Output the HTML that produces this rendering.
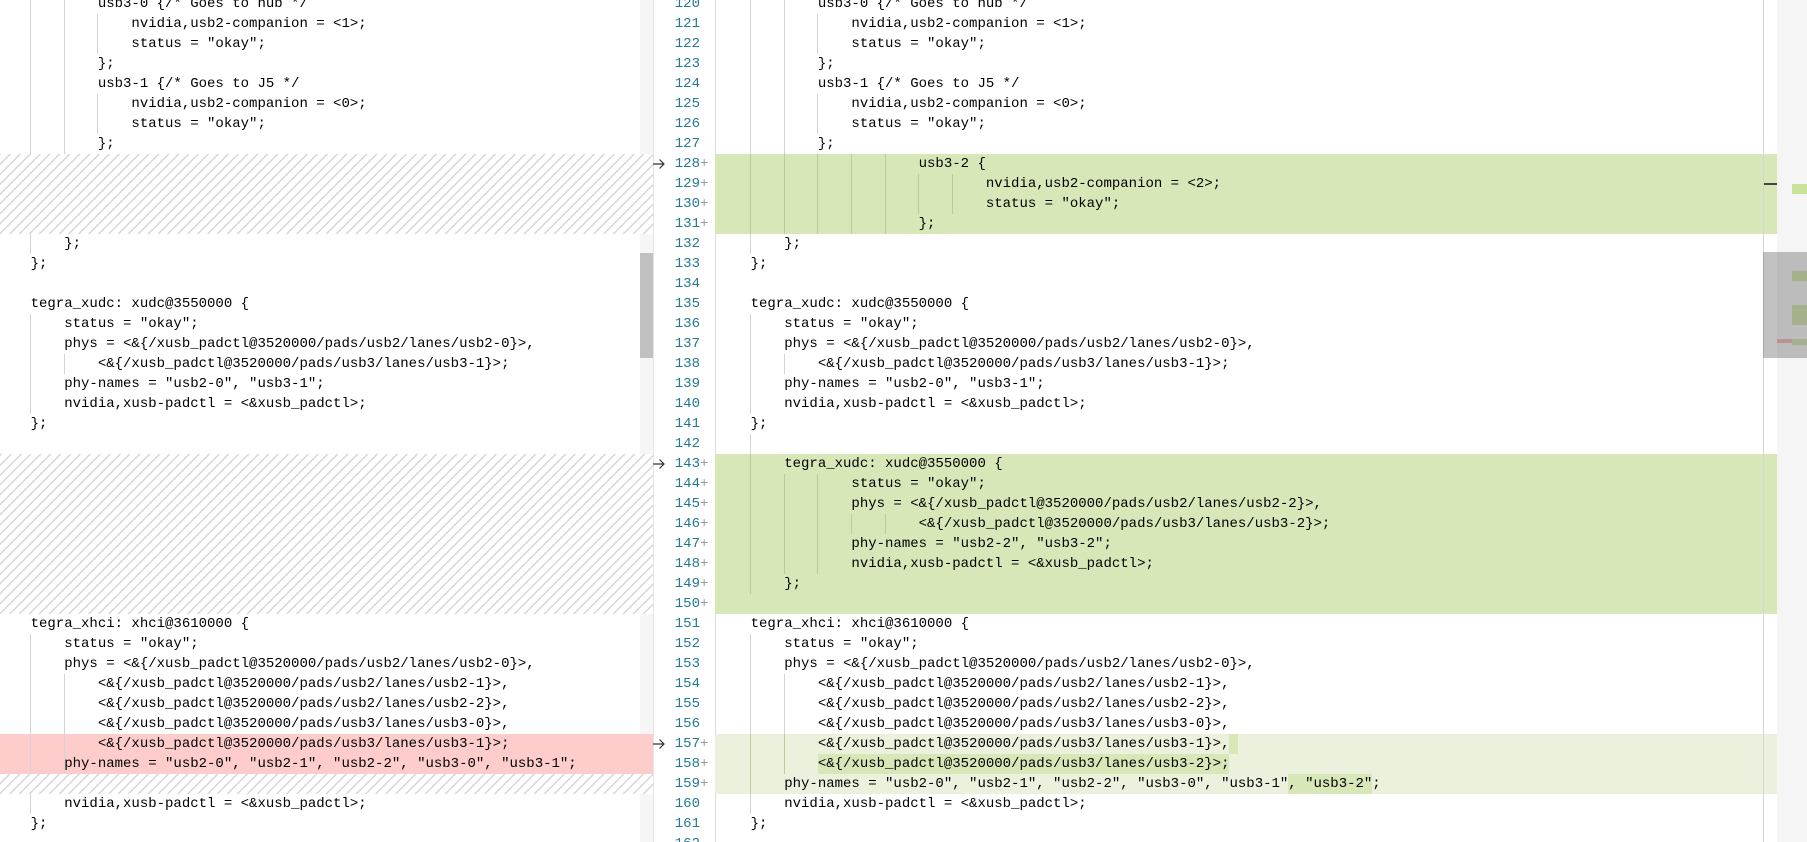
<!DOCTYPE html>
<html><head><meta charset="utf-8">
<style>
html,body{margin:0;padding:0;width:1807px;height:842px;overflow:hidden;background:#fff;position:relative;font-family:"Liberation Mono",monospace;}
.a{position:absolute;}
pre{margin:0;position:absolute;font-family:"Liberation Mono",monospace;font-size:14px;line-height:20px;color:#000;white-space:pre;}
.hatch{background:repeating-linear-gradient(-45deg,#d6d6d6 0 1.4px,#fff 1.4px 7px);}
.g{position:absolute;width:1px;background:#d3d3d3;}
.gg{position:absolute;width:1px;background:#bccb9c;}
.ln{color:#237893;text-align:right;width:60px;}
.pl{color:#9a9a9a;}
</style></head><body>

<!-- left pane -->
<div class="a" style="left:0;top:0;width:654px;height:842px;overflow:hidden;">
  <div class="a hatch" style="left:0;top:154px;width:654px;height:80px"></div>
  <div class="a hatch" style="left:0;top:454px;width:654px;height:160px"></div>
  <div class="a hatch" style="left:0;top:774px;width:654px;height:20px"></div>
  <div class="a" style="left:0;top:734px;width:654px;height:40px;background:#ffcccc"></div>
  <!-- left guides -->
  <div class="g" style="left:30px;top:-6px;height:160px"></div>
  <div class="g" style="left:64px;top:-6px;height:160px"></div>
  <div class="g" style="left:97px;top:14px;height:40px"></div>
  <div class="g" style="left:97px;top:94px;height:40px"></div>
  <div class="g" style="left:30px;top:234px;height:20px"></div>
  <div class="g" style="left:30px;top:314px;height:100px"></div>
  <div class="g" style="left:64px;top:354px;height:20px"></div>
  <div class="g" style="left:30px;top:634px;height:140px"></div>
  <div class="g" style="left:30px;top:794px;height:20px"></div>
  <div class="g" style="left:64px;top:674px;height:100px"></div>
  <div class="a" style="left:0;top:0;width:640px;height:842px;overflow:hidden">
<pre style="left:-3px;top:-6px">            usb3-0 {/* Goes to hub */
                nvidia,usb2-companion = &lt;1&gt;;
                status = "okay";
            };
            usb3-1 {/* Goes to J5 */
                nvidia,usb2-companion = &lt;0&gt;;
                status = "okay";
            };




        };
    };

    tegra_xudc: xudc@3550000 {
        status = "okay";
        phys = &lt;&amp;{/xusb_padctl@3520000/pads/usb2/lanes/usb2-0}&gt;,
            &lt;&amp;{/xusb_padctl@3520000/pads/usb3/lanes/usb3-1}&gt;;
        phy-names = "usb2-0", "usb3-1";
        nvidia,xusb-padctl = &lt;&amp;xusb_padctl&gt;;
    };









    tegra_xhci: xhci@3610000 {
        status = "okay";
        phys = &lt;&amp;{/xusb_padctl@3520000/pads/usb2/lanes/usb2-0}&gt;,
            &lt;&amp;{/xusb_padctl@3520000/pads/usb2/lanes/usb2-1}&gt;,
            &lt;&amp;{/xusb_padctl@3520000/pads/usb2/lanes/usb2-2}&gt;,
            &lt;&amp;{/xusb_padctl@3520000/pads/usb3/lanes/usb3-0}&gt;,
            &lt;&amp;{/xusb_padctl@3520000/pads/usb3/lanes/usb3-1}&gt;;
        phy-names = "usb2-0", "usb2-1", "usb2-2", "usb3-0", "usb3-1";

        nvidia,xusb-padctl = &lt;&amp;xusb_padctl&gt;;
    };</pre>
  </div>
  <!-- left scrollbar column -->
  <div class="a" style="left:640px;top:0;width:13px;height:154px;background:#f6f6f6"></div>
  <div class="a" style="left:640px;top:234px;width:13px;height:220px;background:#f6f6f6"></div>
  <div class="a" style="left:640px;top:614px;width:13px;height:120px;background:#f6f6f6"></div>
  <div class="a" style="left:640px;top:794px;width:13px;height:48px;background:#f6f6f6"></div>
  <div class="a" style="left:640px;top:253px;width:13px;height:105px;background:#c1c1c1"></div>
  <div class="a" style="left:653px;top:0;width:1px;height:842px;background:#e6e6e6"></div>
</div>

<!-- right pane -->
<div class="a" style="left:715px;top:0;width:1px;height:842px;background:#dedede"></div>
<div class="a" style="left:715px;top:154px;width:1062px;height:80px;background:#d8e7b8"></div>
<div class="a" style="left:715px;top:454px;width:1062px;height:160px;background:#d8e7b8"></div>
<div class="a" style="left:715px;top:734px;width:1062px;height:60px;background:#ecf1de"></div>
<div class="a" style="left:1229px;top:734px;width:9px;height:20px;background:#d8e7b8"></div>
<div class="a" style="left:818px;top:754px;width:411px;height:20px;background:#d8e7b8"></div>
<div class="a" style="left:1288px;top:774px;width:84px;height:20px;background:#d8e7b8"></div>

<!-- right guides -->
<div class="g" style="left:750px;top:-6px;height:160px"></div>
<div class="g" style="left:784px;top:-6px;height:160px"></div>
<div class="g" style="left:817px;top:14px;height:40px"></div>
<div class="g" style="left:817px;top:94px;height:40px"></div>
<div class="gg" style="left:750px;top:154px;height:80px"></div>
<div class="gg" style="left:784px;top:154px;height:80px"></div>
<div class="gg" style="left:817px;top:154px;height:80px"></div>
<div class="gg" style="left:851px;top:154px;height:80px"></div>
<div class="gg" style="left:885px;top:154px;height:80px"></div>
<div class="gg" style="left:918px;top:174px;height:40px"></div>
<div class="gg" style="left:952px;top:174px;height:40px"></div>
<div class="g" style="left:750px;top:234px;height:20px"></div>
<div class="g" style="left:750px;top:314px;height:100px"></div>
<div class="g" style="left:784px;top:354px;height:20px"></div>
<div class="g" style="left:750px;top:434px;height:20px"></div>
<div class="gg" style="left:750px;top:454px;height:140px"></div>
<div class="gg" style="left:784px;top:474px;height:100px"></div>
<div class="gg" style="left:817px;top:474px;height:100px"></div>
<div class="gg" style="left:851px;top:514px;height:20px"></div>
<div class="gg" style="left:885px;top:514px;height:20px"></div>
<div class="g" style="left:750px;top:634px;height:100px"></div>
<div class="gg" style="left:750px;top:734px;height:60px"></div>
<div class="g" style="left:750px;top:794px;height:20px"></div>
<div class="g" style="left:784px;top:674px;height:60px"></div>
<div class="gg" style="left:784px;top:734px;height:40px"></div>

<!-- line numbers -->
<pre class="ln" style="left:640px;top:-6px">120
121
122
123
124
125
126
127
128
129
130
131
132
133
134
135
136
137
138
139
140
141
142
143
144
145
146
147
148
149
150
151
152
153
154
155
156
157
158
159
160
161
162</pre>
<pre class="pl" style="left:700px;top:154px">+
+
+
+</pre>
<pre class="pl" style="left:700px;top:454px">+
+
+
+
+
+
+
+</pre>
<pre class="pl" style="left:700px;top:734px">+
+
+</pre>
<svg class="a" style="left:652px;top:158px" width="14" height="12" viewBox="0 0 14 12"><path d="M1 6H12M7.5 1.5L12 6L7.5 10.5" fill="none" stroke="#333" stroke-width="1.2"/></svg>
<svg class="a" style="left:652px;top:458px" width="14" height="12" viewBox="0 0 14 12"><path d="M1 6H12M7.5 1.5L12 6L7.5 10.5" fill="none" stroke="#333" stroke-width="1.2"/></svg>
<svg class="a" style="left:652px;top:738px" width="14" height="12" viewBox="0 0 14 12"><path d="M1 6H12M7.5 1.5L12 6L7.5 10.5" fill="none" stroke="#333" stroke-width="1.2"/></svg>

<div class="a" style="left:716px;top:0;width:1047px;height:842px;overflow:hidden">
<pre style="left:1px;top:-6px">            usb3-0 {/* Goes to hub */
                nvidia,usb2-companion = &lt;1&gt;;
                status = "okay";
            };
            usb3-1 {/* Goes to J5 */
                nvidia,usb2-companion = &lt;0&gt;;
                status = "okay";
            };
                        usb3-2 {
                                nvidia,usb2-companion = &lt;2&gt;;
                                status = "okay";
                        };
        };
    };

    tegra_xudc: xudc@3550000 {
        status = "okay";
        phys = &lt;&amp;{/xusb_padctl@3520000/pads/usb2/lanes/usb2-0}&gt;,
            &lt;&amp;{/xusb_padctl@3520000/pads/usb3/lanes/usb3-1}&gt;;
        phy-names = "usb2-0", "usb3-1";
        nvidia,xusb-padctl = &lt;&amp;xusb_padctl&gt;;
    };

        tegra_xudc: xudc@3550000 {
                status = "okay";
                phys = &lt;&amp;{/xusb_padctl@3520000/pads/usb2/lanes/usb2-2}&gt;,
                        &lt;&amp;{/xusb_padctl@3520000/pads/usb3/lanes/usb3-2}&gt;;
                phy-names = "usb2-2", "usb3-2";
                nvidia,xusb-padctl = &lt;&amp;xusb_padctl&gt;;
        };

    tegra_xhci: xhci@3610000 {
        status = "okay";
        phys = &lt;&amp;{/xusb_padctl@3520000/pads/usb2/lanes/usb2-0}&gt;,
            &lt;&amp;{/xusb_padctl@3520000/pads/usb2/lanes/usb2-1}&gt;,
            &lt;&amp;{/xusb_padctl@3520000/pads/usb2/lanes/usb2-2}&gt;,
            &lt;&amp;{/xusb_padctl@3520000/pads/usb3/lanes/usb3-0}&gt;,
            &lt;&amp;{/xusb_padctl@3520000/pads/usb3/lanes/usb3-1}&gt;,
            &lt;&amp;{/xusb_padctl@3520000/pads/usb3/lanes/usb3-2}&gt;;
        phy-names = "usb2-0", "usb2-1", "usb2-2", "usb3-0", "usb3-1", "usb3-2";
        nvidia,xusb-padctl = &lt;&amp;xusb_padctl&gt;;
    };</pre>
</div>

<!-- overview / minimap -->
<div class="a" style="left:1763px;top:0;width:1px;height:842px;background:#d6d6d6"></div>
<div class="a" style="left:1777px;top:0;width:30px;height:842px;background:#f5f5f5"></div>
<div class="a" style="left:1764px;top:183px;width:13px;height:2px;background:#444"></div>
<div class="a" style="left:1792px;top:184px;width:15px;height:10px;background:#c9e19a"></div>
<div class="a" style="left:1792px;top:271px;width:15px;height:10px;background:#c9e19a"></div>
<div class="a" style="left:1792px;top:305px;width:15px;height:20px;background:#c9e19a"></div>
<div class="a" style="left:1792px;top:339px;width:15px;height:6px;background:#c9e19a"></div>
<div class="a" style="left:1777px;top:339px;width:15px;height:4px;background:#f3a6a6"></div>
<div class="a" style="left:1763px;top:252px;width:44px;height:106px;background:rgba(120,120,120,0.45)"></div>
</body></html>
